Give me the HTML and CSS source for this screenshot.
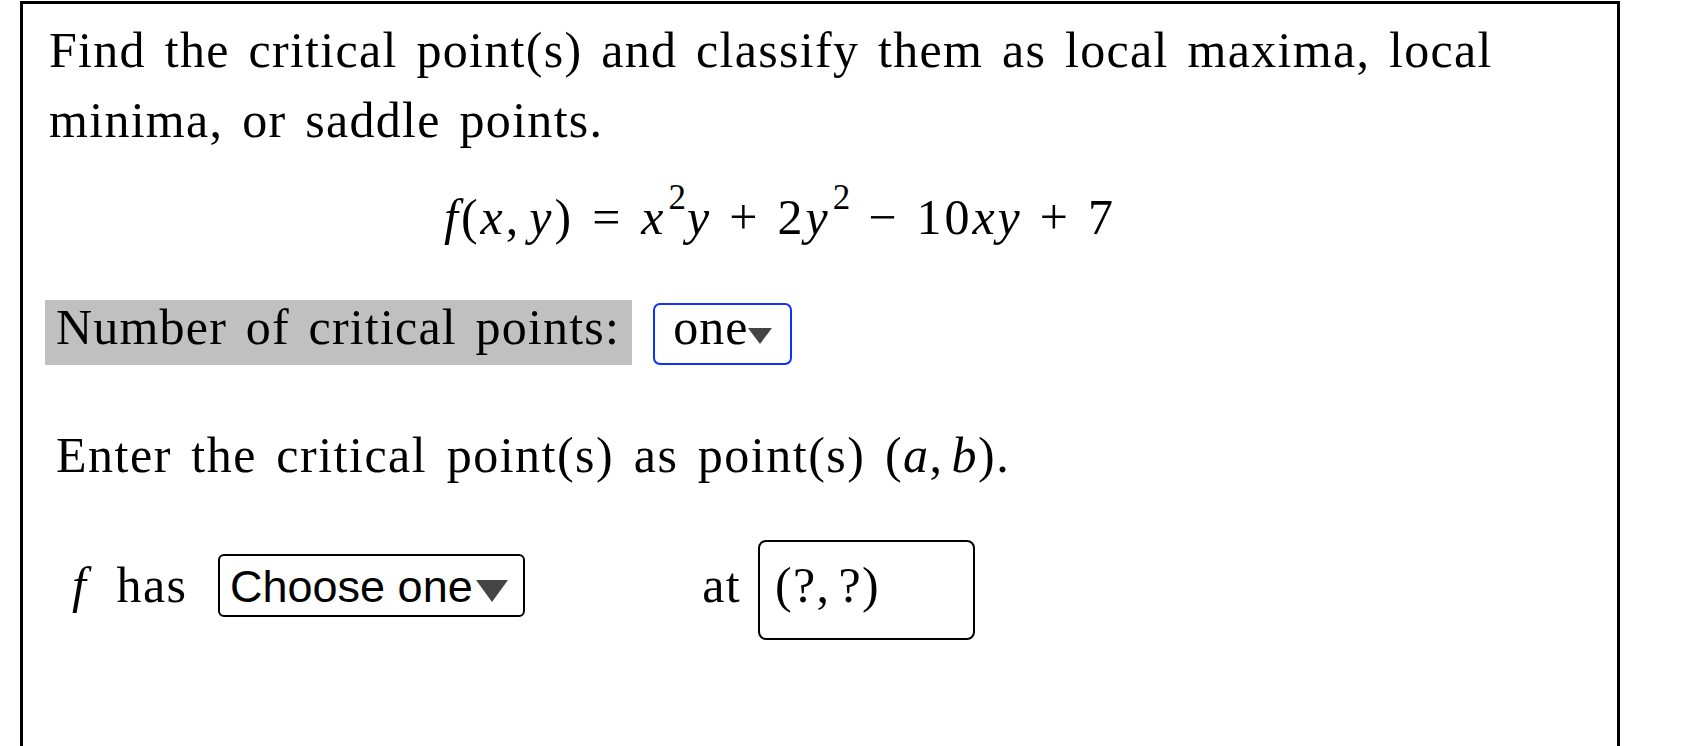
FILE: index.html
```html
<!DOCTYPE html>
<html lang="en">
<head>
<meta charset="utf-8">
<title>Critical points</title>
<link rel="stylesheet" href="styles.css">
</head>
<body>
<div class="frame">
  <p class="intro">Find the critical point(s) and classify them as local maxima, local minima, or saddle points.</p>
  <div class="formula"><span class="mi">f</span>(<span class="mi">x</span>,<span class="thin"></span><span class="mi">y</span>)<span class="rel">=</span><span class="mi">x</span><sup class="sup">2</sup><span class="mi">y</span><span class="bin">+</span>2<span class="mi">y</span><sup class="sup">2</sup><span class="bin">−</span>10<span class="mi">xy</span><span class="bin">+</span>7</div>
  <div class="number-row">
    <span class="label">Number of critical points:</span>
    <span class="dropdown">one<span class="tri tri-serif"></span></span>
  </div>
  <p class="enter">Enter the critical point(s) as point(s) (<span class="mi">a</span>,<span class="thin"></span><span class="mi">b</span>).</p>
  <div class="answer-row">
    <span class="fhas"><span class="mi fvar">f</span> has</span>
    <span class="select">Choose one<span class="tri tri-sans"></span></span>
    <span class="at">at</span>
    <span class="input">(?,<span class="thin"></span>?)</span>
  </div>
</div>
</body>
</html>
```

FILE: styles.css
```css
html, body {
  margin: 0;
  padding: 0;
  overflow: hidden;
  background: #ffffff;
}

.frame {
  box-sizing: border-box;
  width: 1600px;
  height: 800px;
  margin: 1px 0 0 20px;
  border: 3px solid #000000;
  border-bottom: none;
  padding: 11px 0 0 22px;
  color: #000000;
  font-family: "Liberation Serif", "Times New Roman", serif;
  font-size: 50px;
  letter-spacing: 1.35px;
  word-spacing: 5.5px;
  line-height: 70px;
}

.intro {
  margin: 0 0 0 4px;
  width: 1510px;
  letter-spacing: 1.3px;
  word-spacing: 5px;
}

.mi {
  font-style: italic;
}

.fvar {
  margin-right: 10px;
}

.thin {
  display: inline-block;
  width: 8px;
}

.formula {
  margin: 27px 0 0 4px;
  width: 1462px;
  text-align: center;
  letter-spacing: 3px;
  white-space: nowrap;
}

.rel {
  margin: 0 18px;
}

.bin {
  margin: 0 17px;
}

.sup {
  font-size: 35px;
  line-height: 0;
  vertical-align: 25px;
  letter-spacing: 1px;
  margin-left: 2px;
}

.number-row {
  display: flex;
  align-items: baseline;
  margin-top: 48px;
}

.label {
  background: #c0c0c0;
  padding: 0 12px 11px 11px;
  line-height: 54px;
  letter-spacing: 1.2px;
  word-spacing: 5px;
}

.dropdown {
  margin-left: 21px;
  border: 2px solid #1030ff;
  border-radius: 7px;
  padding: 0 18px 14px 18px;
  line-height: 44px;
  letter-spacing: 1px;
}

.tri {
  display: inline-block;
  width: 0;
  height: 0;
  vertical-align: baseline;
}

.tri-serif {
  border-left: 12.5px solid transparent;
  border-right: 12.5px solid transparent;
  border-top: 16px solid #444444;
  margin-left: 0;
}

.tri-sans {
  border-left: 16px solid transparent;
  border-right: 16px solid transparent;
  border-top: 22px solid #444444;
  margin-left: 3px;
}

.enter {
  margin: 55px 0 0 11px;
  letter-spacing: 1.5px;
}

.answer-row {
  display: flex;
  align-items: baseline;
  margin-top: 50px;
}

.fhas {
  box-sizing: border-box;
  width: 173px;
  padding-left: 27px;
}

.select {
  box-sizing: border-box;
  width: 307px;
  height: 63px;
  border: 2px solid #000000;
  border-radius: 6px;
  padding: 3px 0 0 10px;
  font-family: "Liberation Sans", Arial, sans-serif;
  font-size: 45px;
  line-height: 55px;
  letter-spacing: 0;
  word-spacing: 0;
}

.at {
  box-sizing: border-box;
  width: 233px;
  padding-right: 17px;
  text-align: right;
}

.input {
  box-sizing: border-box;
  width: 217px;
  height: 100px;
  border: 2px solid #000000;
  border-radius: 8px;
  padding: 8px 0 0 15px;
  line-height: 70px;
}
```
